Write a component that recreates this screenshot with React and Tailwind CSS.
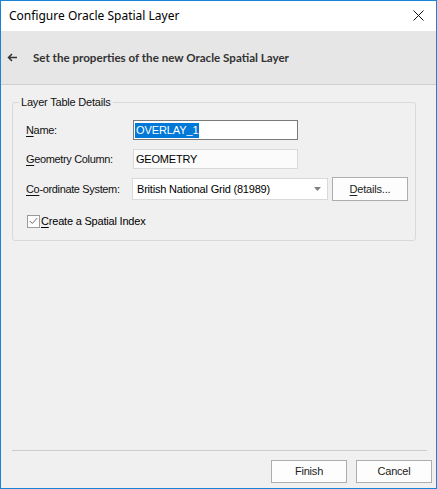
import { useState } from "react";

function FormLabel({ hot, rest }) {
  return (
    <span className="w-[107px] shrink-0 text-[#111111] tracking-[-0.35px]">
      <span className="underline underline-offset-[2px]">{hot}</span>
      {rest}
    </span>
  );
}

export default function App() {
  const [spatialIndex, setSpatialIndex] = useState(true);

  return (
    <div className="w-[437px] h-[489px] border border-[#1883d7] bg-[#f0f0f0] flex flex-col font-['Liberation_Sans',Arial,sans-serif] text-[11px] text-black overflow-hidden">
      {/* Title bar */}
      <div className="h-[30px] bg-white flex items-center justify-between pl-[8px] pr-[12px] shrink-0">
        <span className="font-['Noto_Sans',sans-serif] text-[12px] text-black">
          Configure Oracle Spatial Layer
        </span>
        <svg width="11" height="11" viewBox="0 0 11 11" className="mb-[2px]">
          <path d="M0.5 0.5L10.5 10.5M10.5 0.5L0.5 10.5" stroke="#111" strokeWidth="1" />
        </svg>
      </div>

      {/* Wizard header */}
      <div className="h-[54px] bg-[#e6e6e6] border-b border-[#cfcfcf] flex items-center shrink-0">
        <svg width="11" height="9" viewBox="0 0 11 9" className="ml-[6px] mr-[15px]">
          <path d="M10 4.5H1.5M5 1L1.5 4.5L5 8" stroke="#333" strokeWidth="1.5" fill="none" />
        </svg>
        <span className="font-['Lato',sans-serif] font-bold text-[11.6px] text-[#333333]">
          Set the properties of the new Oracle Spatial Layer
        </span>
      </div>

      {/* Body */}
      <div className="flex-1 pl-[11px] pt-[11px]">
        <fieldset className="w-[404px] h-[145px] border border-[#d9d9d9] rounded-[3px] pl-[13px] pr-0">
          <legend className="-ml-[7px] px-[2px] leading-[13px] text-[#111111] tracking-[-0.2px]">
            Layer Table Details
          </legend>

          <div className="flex items-center h-[20px] mt-[11px]">
            <FormLabel hot="N" rest="ame:" />
            <div className="w-[165px] h-[20px] border border-[#7a7a7a] bg-white flex items-center pl-[1px]">
              <span className="bg-[#0078d7] text-white leading-[15px] px-[1px] tracking-[-0.1px]">OVERLAY_1</span>
            </div>
          </div>

          <div className="flex items-center h-[20px] mt-[9px]">
            <FormLabel hot="G" rest="eometry Column:" />
            <div className="w-[165px] h-[20px] border border-[#d9d9d9] bg-[#fbfbfb] flex items-center pl-[2px] tracking-[-0.2px]">
              GEOMETRY
            </div>
          </div>

          <div className="flex items-center h-[24px] mt-[8px]">
            <FormLabel hot="Co" rest="-ordinate System:" />
            <div className="w-[196px] h-[22px] -ml-[1px] border border-[#d9d9d9] bg-white flex items-center justify-between pl-[4px] pr-[6px]">
              <span className="tracking-[-0.2px]">British National Grid (81989)</span>
              <svg width="7" height="4" viewBox="0 0 7 4">
                <path d="M0 0H7L3.5 4Z" fill="#808080" />
              </svg>
            </div>
            <button className="ml-[4px] w-[76px] h-[24px] border border-[#adadad] bg-[#fdfdfd] text-[#222] tracking-[-0.2px]">
              <span className="underline underline-offset-[2px]">D</span>etails...
            </button>
          </div>

          <label className="flex items-center mt-[12px] ml-[1px] gap-[1px] cursor-default">
            <span
              onClick={() => setSpatialIndex(!spatialIndex)}
              className="w-[13px] h-[13px] border border-[#9a9a9a] bg-white flex items-center justify-center"
            >
              {spatialIndex && (
                <svg width="9" height="8" viewBox="0 0 9 8">
                  <path d="M0.8 4L3.3 6.5L8.2 1" stroke="#6b6b6b" strokeWidth="1" fill="none" />
                </svg>
              )}
            </span>
            <span className="tracking-[-0.2px]">
              <span className="underline underline-offset-[2px]">C</span>reate a Spatial Index
            </span>
          </label>
        </fieldset>
      </div>

      {/* Footer */}
      <div className="shrink-0 pl-[11px] pr-[4px]">
        <div className="h-px bg-[#cccccc] w-[415px]" />
        <div className="flex justify-end gap-[9px] mt-[9px] mb-[5px]">
          <button className="w-[76px] h-[23px] border border-[#adadad] bg-[#fdfdfd] text-[#222] tracking-[-0.2px]">
            Finish
          </button>
          <button className="w-[76px] h-[23px] border border-[#adadad] bg-[#fdfdfd] text-[#222] tracking-[-0.2px]">
            Cancel
          </button>
        </div>
      </div>
    </div>
  );
}
